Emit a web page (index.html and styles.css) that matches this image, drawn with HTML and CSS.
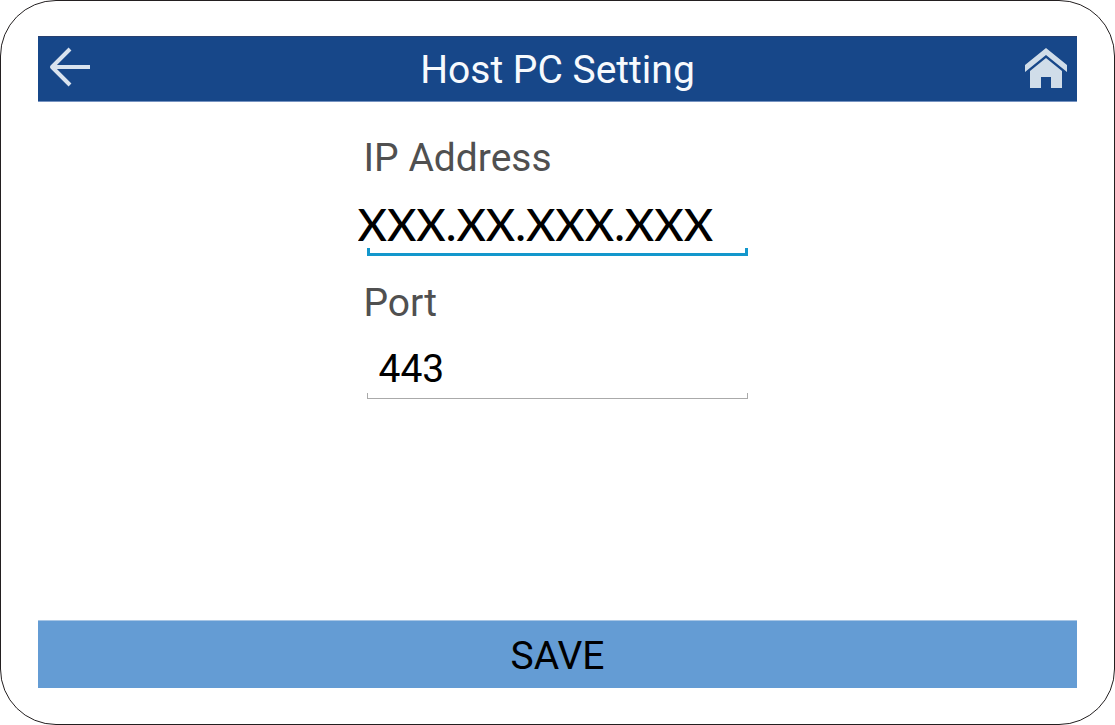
FILE: index.html
```html
<!DOCTYPE html>
<html lang="en">
<head>
<meta charset="utf-8">
<meta name="viewport" content="width=device-width, initial-scale=1">
<title>Host PC Setting</title>
<link rel="stylesheet" href="styles.css">
</head>
<body>
<form class="device">
  <header class="bar">
    <button class="icon-button" type="button" aria-label="Back">
      <svg width="42" height="42" viewBox="0 0 42 42" fill="none" stroke="#d9e3ef" stroke-width="4" stroke-linejoin="round"><path d="M22 1L4 19L22 37M4 19H42"/></svg>
    </button>
    <h1 class="title">Host PC Setting</h1>
    <button class="icon-button" type="button" aria-label="Home">
      <svg width="42" height="42" viewBox="0 0 42 42" fill="#d0dde9"><path d="M21 0L42 17V24L21 7L0 24V17Z"/><path d="M21 10L37 23V40H26V29H16V40H5V23Z"/></svg>
    </button>
  </header>
  <main class="fields">
    <div class="field">
      <label class="label" for="ip">IP Address</label>
      <input class="input address" id="ip" type="text" value="XXX.XX.XXX.XXX">
      <span class="underline active"></span>
    </div>
    <div class="field">
      <label class="label" for="port">Port</label>
      <input class="input port" id="port" type="text" value="443">
      <span class="underline"></span>
    </div>
  </main>
  <button class="save" type="submit">SAVE</button>
</form>
</body>
</html>
```
FILE: styles.css
```css
* {
  box-sizing: border-box;
}

body {
  margin: 0;
  background: #fff;
  font-family: Roboto, sans-serif;
}

.device {
  display: flex;
  flex-direction: column;
  min-height: 100vh;
  padding: 35px 37px 36px;
  border: 1px solid #231f20;
  border-radius: 56px;
}

.bar {
  display: flex;
  align-items: center;
  justify-content: space-between;
  height: 66px;
  padding: 0 10px;
  border-top: 1px solid #27406f;
  border-bottom: 1px solid #7592c0;
  background: #174789;
}

.icon-button {
  display: flex;
  padding: 0;
  border: 0;
  background: none;
}

.icon-button svg {
  overflow: visible;
}

.title {
  margin: 0;
  padding-top: 2px;
  color: #f7fafd;
  font-size: 39px;
  font-weight: 400;
  line-height: 62px;
}

.fields {
  display: flex;
  flex: 1;
  flex-direction: column;
  gap: 23px;
  width: 400px;
  margin: 0 auto;
  padding: 32px 10px 0 0;
}

.field {
  display: flex;
  flex-direction: column;
}

.label {
  padding-left: 6px;
  color: #505050;
  font-size: 39px;
  line-height: 48px;
}

.input {
  width: 100%;
  height: 66px;
  padding: 18px 0 0;
  border: 0;
  outline: 0;
  background: none;
  color: #000;
}

.address {
  font-family: Lato, sans-serif;
  font-size: 45px;
  font-weight: 500;
}

.port {
  padding-left: 21px;
  font-family: Roboto, sans-serif;
  font-size: 39px;
}

.underline {
  height: 6px;
  margin-left: 9px;
  border: 1px solid #aaa;
  border-top: 0;
}

.underline.active {
  height: 8px;
  border: 3px solid #1397cc;
  border-top: 0;
}

.save {
  height: 68px;
  padding: 2px 0 0;
  border: 0;
  border-top: 1px solid #a8c6e5;
  background: #649cd4;
  color: #000;
  font-family: Roboto, sans-serif;
  font-size: 39px;
}
```
